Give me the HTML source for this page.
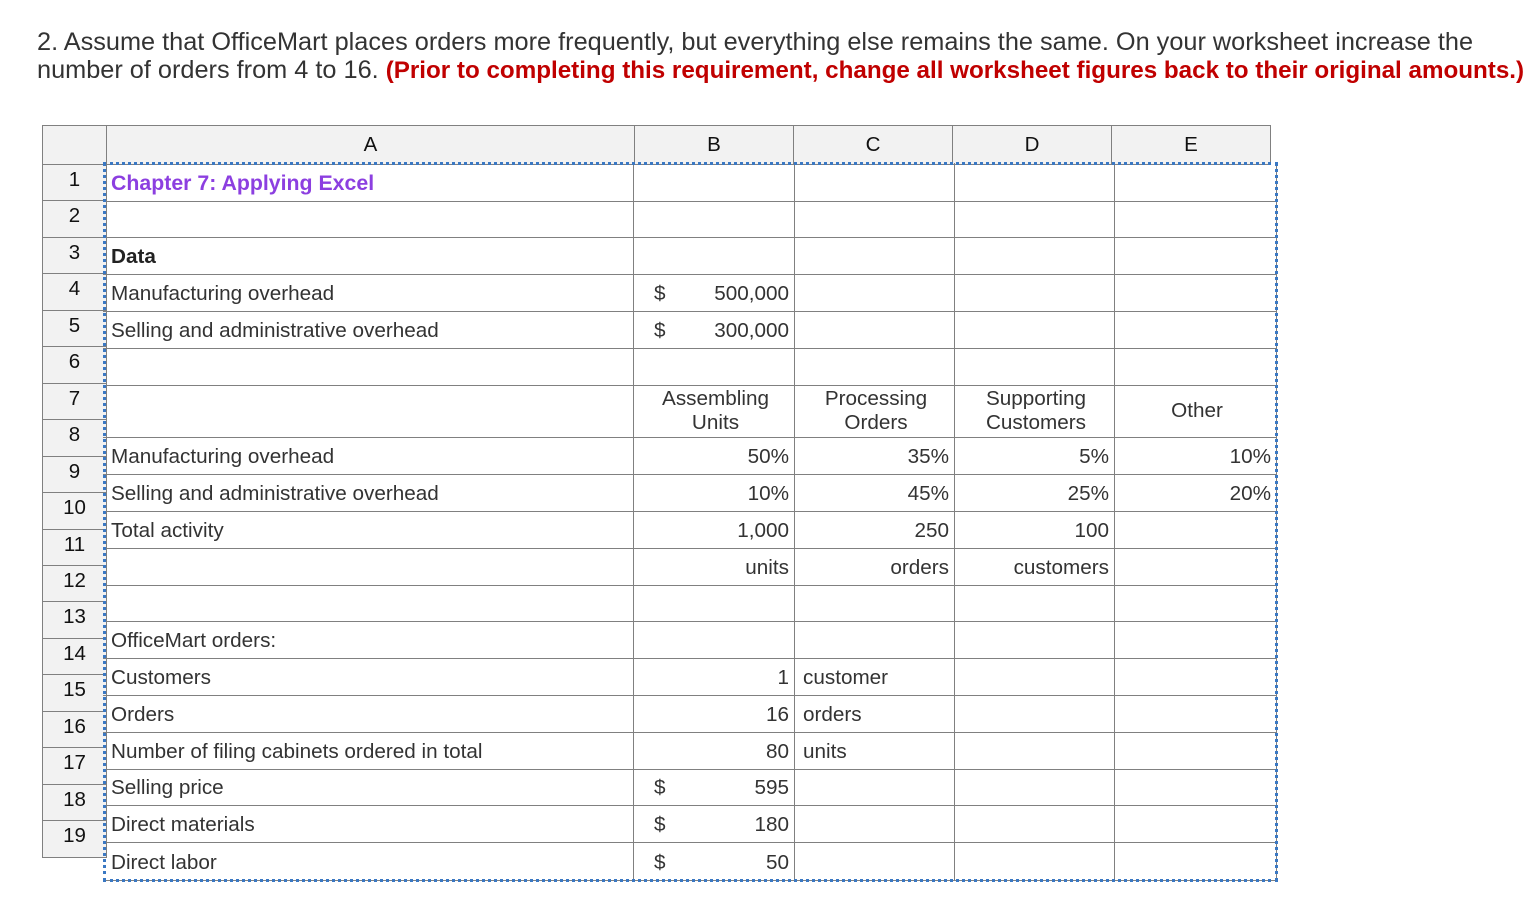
<!DOCTYPE html>
<html><head><meta charset="utf-8"><style>
body{margin:0;width:1540px;height:912px;background:#fff;font-family:"Liberation Sans",sans-serif;position:relative;overflow:hidden;color:#333}
.q{position:absolute;left:37px;top:28px;font-size:25.3px;line-height:28px;color:#333;white-space:nowrap}
.q b{color:#c00000;font-size:24.2px}
.h{position:absolute;background:#f2f2f2;border:1px solid #808080;box-sizing:border-box;text-align:center;color:#111;font-size:20.5px}
.c{position:absolute;border-right:1px solid #808080;border-bottom:1px solid #808080;box-sizing:border-box;font-size:20.7px;color:#333;white-space:nowrap;display:flex;align-items:flex-end;padding:0 5px 5px 8px}
.r{justify-content:flex-end}
.m{justify-content:center;text-align:center;align-items:center;line-height:24px;padding-bottom:0}
#sel{position:absolute;left:103px;top:162px;width:1175px;height:720px;border:3px dotted #3a78c3;box-sizing:border-box;pointer-events:none}
</style></head><body>
<div class="q">2. Assume that OfficeMart places orders more frequently, but everything else remains the same. On your worksheet increase the<br>number of orders from 4 to 16. <b>(Prior to completing this requirement, change all worksheet figures back to their original amounts.)</b></div>
<div id="g"></div>
<div id="sel"></div>
<script>
var g=document.getElementById('g'),H='';
var hc=[[42,106,''],[106,634,'A'],[634,793,'B'],[793,952,'C'],[952,1111,'D'],[1111,1270,'E']];
hc.forEach(function(c){H+='<div class="h" style="left:'+c[0]+'px;top:125px;width:'+(c[1]-c[0]+1)+'px;height:40px;line-height:38px">'+c[2]+'</div>';});
for(var i=0;i<19;i++){var t=164+Math.round(i*36.45),b=164+Math.round((i+1)*36.45);
H+='<div class="h" style="left:42px;top:'+t+'px;width:65px;height:'+(b-t+1)+'px;line-height:30px">'+(i+1)+'</div>';}
var ys=[163,201,237,274,311,348,385,437,474,511,548,585,621,658,695,732,769,805,842,880];
var xs=[103,634,795,955,1115,1277];
var D=[
['<b style="color:#8c3fe0;font-size:21.3px">Chapter 7: Applying Excel</b>','','','',''],
['','','','',''],
['<b style="color:#222">Data</b>','','','',''],
['Manufacturing overhead','$$500,000','','',''],
['Selling and administrative overhead','$$300,000','','',''],
['','','','',''],
['','M:Assembling<br>Units','M:Processing<br>Orders','M:Supporting<br>Customers','M:Other'],
['Manufacturing overhead','R:50%','R:35%','R:5%','R:10%'],
['Selling and administrative overhead','R:10%','R:45%','R:25%','R:20%'],
['Total activity','R:1,000','R:250','R:100',''],
['','R:units','R:orders','R:customers',''],
['','','','',''],
['OfficeMart orders:','','','',''],
['Customers','R:1','customer','',''],
['Orders','R:16','orders','',''],
['Number of filing cabinets ordered in total','R:80','units','',''],
['Selling price','$$595','','',''],
['Direct materials','$$180','','',''],
['Direct labor','$$50','','','']];
D.forEach(function(row,ri){row.forEach(function(v,ci){
var cls='c',txt=v;
if(v.indexOf('R:')==0){cls+=' r';txt=v.slice(2);}
else if(v.indexOf('M:')==0){cls+=' m';txt=v.slice(2);}
else if(v.indexOf('$$')==0){cls+=' r';txt='<span style="position:absolute;left:20px">$</span>'+v.slice(2);}
var x=xs[ci],w=xs[ci+1]-x,y=ys[ri],h=ys[ri+1]-y+1;
H+='<div class="'+cls+'" style="left:'+x+'px;top:'+y+'px;width:'+w+'px;height:'+h+'px">'+txt+'</div>';
});});
g.innerHTML=H;
</script>
</body></html>
